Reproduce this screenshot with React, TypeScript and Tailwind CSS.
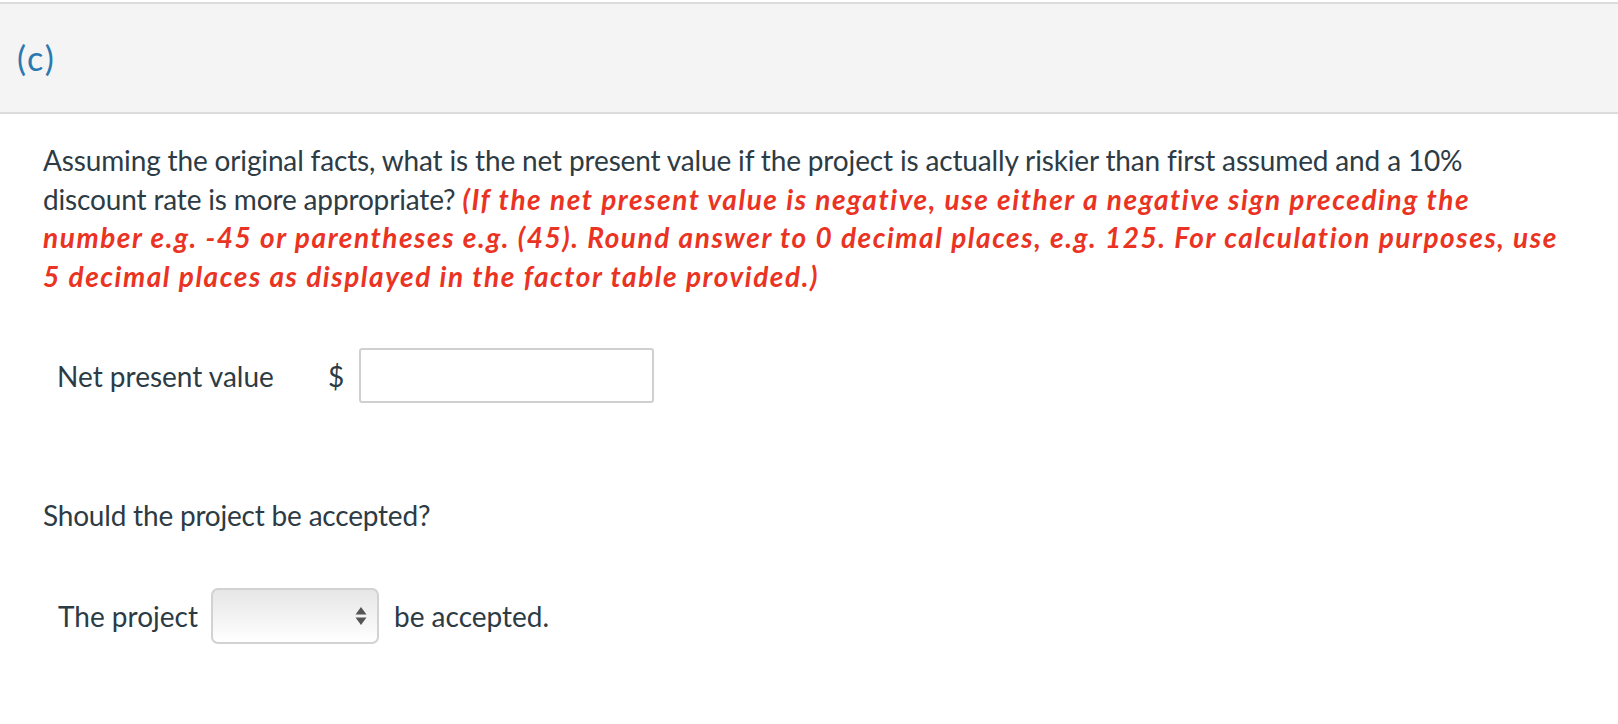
import React from "react";

export default function App() {
  const font = { fontFamily: "Lato, 'Noto Sans', sans-serif" };
  return (
    <div className="w-[1618px] h-[724px] bg-white text-[#2d3b45]" style={font}>
      <div className="pt-[2px]">
        <div className="h-[112px] bg-[#f4f4f4] border-y-2 border-[#dcdcdc] flex items-center pl-[17px]">
          <span className="text-[34px] leading-none tracking-[2px] text-[#2b78b0]">(c)</span>
        </div>
      </div>
      <div className="pl-[43px] pt-[27px]">
        <p className="w-[1526px] text-[28px] leading-[38.5px] tracking-[-0.15px]">
          Assuming the original facts, what is the net present value if the project is actually riskier than first assumed and a 10% discount rate is more appropriate?{" "}
          <span className="text-[#ea3323] font-bold italic tracking-[1.55px]">
            (If the net present value is negative, use either a negative sign preceding the number e.g. -45 or parentheses e.g. (45). Round answer to 0 decimal places, e.g. 125. For calculation purposes, use 5 decimal places as displayed in the factor table provided.)
          </span>
        </p>
        <div className="flex items-center mt-[53px] pl-[14px]">
          <span className="text-[28px] w-[271px]">Net present value</span>
          <span className="text-[28px] w-[31px]">$</span>
          <div className="w-[295px] h-[55px] bg-white border-2 border-[#d0d0d0] rounded-[3px]"></div>
        </div>
        <p className="text-[28px] tracking-[-0.2px] mt-[91px]">Should the project be accepted?</p>
        <div className="flex items-center mt-[52px] pl-[15px]">
          <span className="text-[28px]">The project</span>
          <div className="ml-[13px] w-[168px] h-[56px] rounded-[7px] border-2 border-[#d2d2d2] bg-gradient-to-b from-[#e6e6e6] to-[#ffffff] flex items-center justify-end pr-[10px]">
            <svg width="12" height="24" viewBox="0 0 12 24">
              <polygon points="6,3 11.5,10.5 0.5,10.5" fill="#555" />
              <polygon points="0.5,13.5 11.5,13.5 6,21" fill="#555" />
            </svg>
          </div>
          <span className="text-[28px] ml-[15px]">be accepted.</span>
        </div>
      </div>
    </div>
  );
}
